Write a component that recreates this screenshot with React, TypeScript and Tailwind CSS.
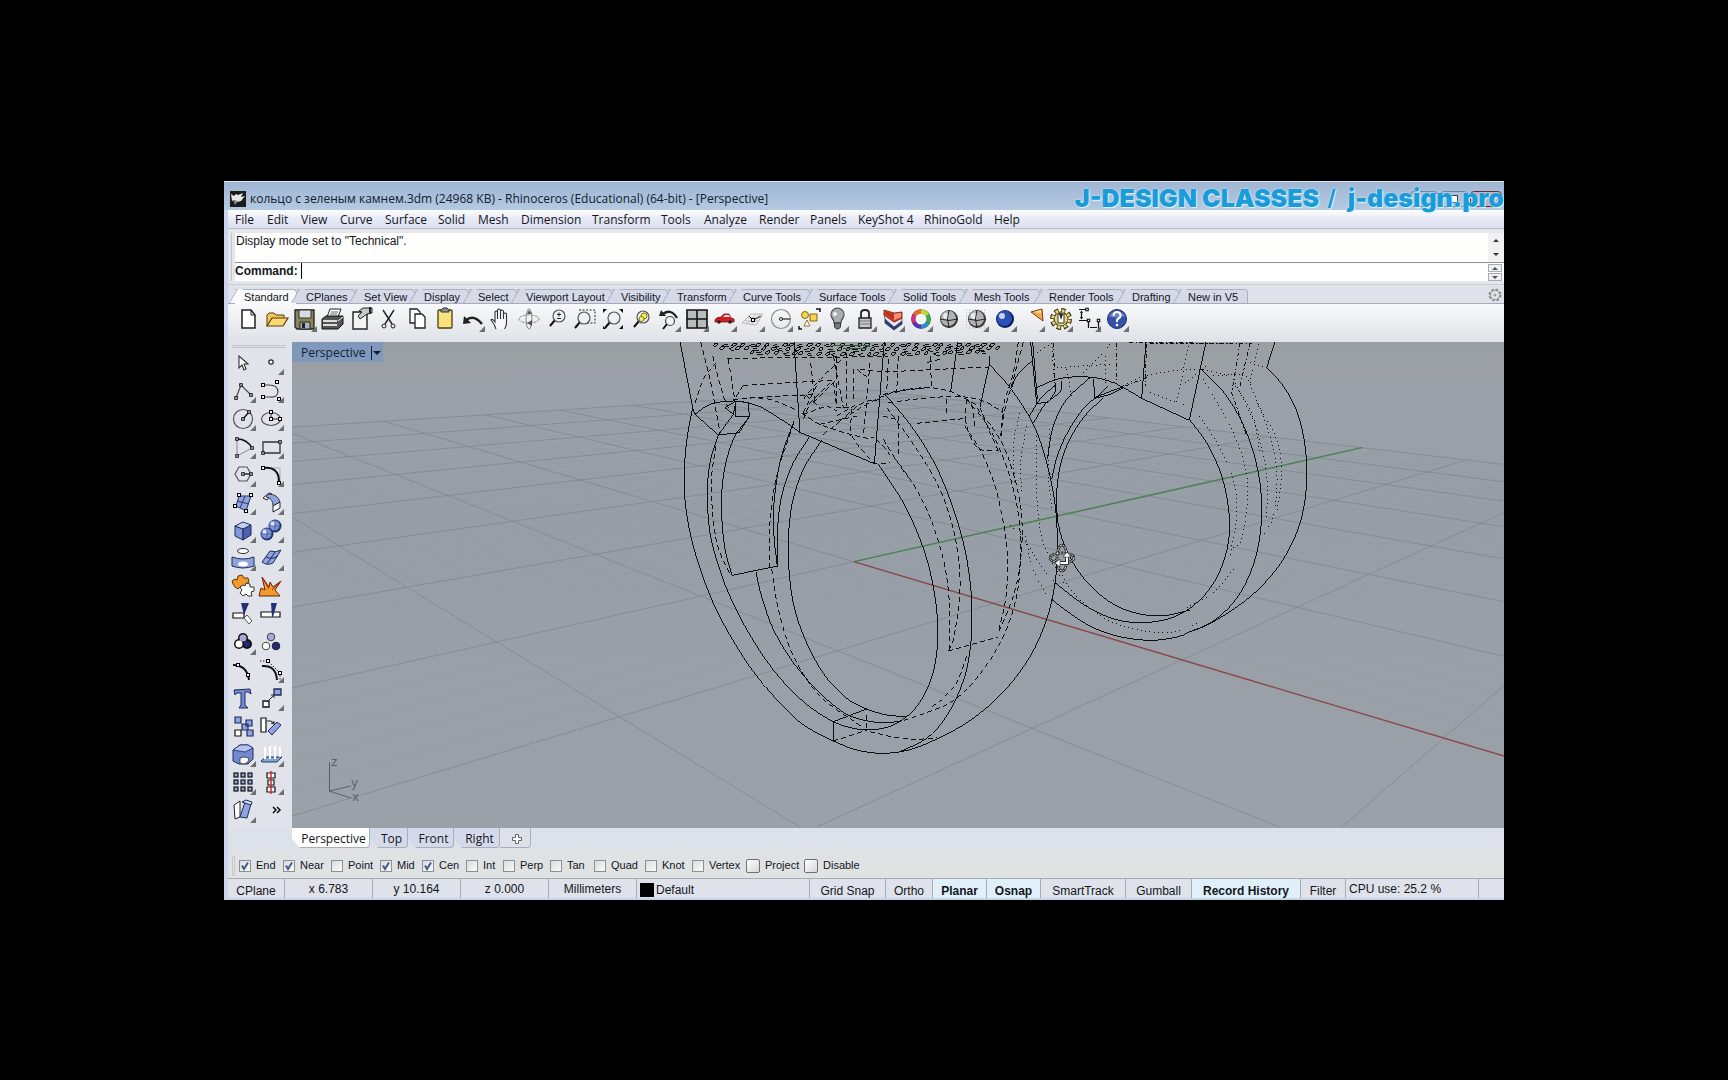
import React from "react";

type Pt = [number, number];

const ARIAL = "font-['Liberation_Sans',Arial,sans-serif]";
const SEGOE = "font-['Open_Sans','Noto_Sans',sans-serif]";

/* ---------- geometry helpers ---------- */

const dist = (a: Pt, b: Pt) => Math.hypot(a[0] - b[0], a[1] - b[1]);

function spline(p: number[]): string {
  const pts: Pt[] = [];
  for (let i = 0; i < p.length; i += 2) pts.push([p[i], p[i + 1]]);
  let d = `M${pts[0][0]} ${pts[0][1]}`;
  for (let i = 0; i < pts.length - 1; i++) {
    const a = pts[i - 1] || pts[i];
    const b = pts[i];
    const c = pts[i + 1];
    const e = pts[i + 2] || c;
    const len = dist(b, c);
    const k1 = len / 3 / (dist(a, b) + len);
    const k2 = len / 3 / (len + dist(c, e));
    d += `C${b[0] + (c[0] - a[0]) * k1} ${b[1] + (c[1] - a[1]) * k1} ${c[0] - (e[0] - b[0]) * k2} ${c[1] - (e[1] - b[1]) * k2} ${c[0]} ${c[1]}`;
  }
  return d;
}

function cross(a: Pt, b: Pt, c: Pt, d: Pt): Pt {
  const m1 = (b[1] - a[1]) / (b[0] - a[0]);
  const m2 = (d[1] - c[1]) / (d[0] - c[0]);
  const x = (c[1] - a[1] + m1 * a[0] - m2 * c[0]) / (m1 - m2);
  return [x, a[1] + m1 * (x - a[0])];
}

const V1: Pt = [2100, -51];
const V2: Pt = [-509, -195];
const FAR_LEFT: Pt = [0, 262];
const FAR_RIGHT: Pt = [1564, 373];

const gridUp: Pt[] = [[0, 262], [0, 310], [0, 365], [0, 435], [0, 522], [0, 638], [0, 803], [0, 1045], [0, 1430], [680, 1460], [1357, 1460]];
const gridDown: Pt[] = [[1564, 373], [1564, 425], [1564, 483], [1564, 560], [1564, 656], [1564, 785], [1564, 948], [1564, 1248], [1275, 1460], [657, 1460]];

const gridPath =
  gridUp.map((p) => { const q = cross(p, V1, V2, FAR_RIGHT); return `M${p[0]} ${p[1]}L${q[0]} ${q[1]}`; }).join("") +
  gridDown.map((p) => { const q = cross(p, V2, V1, FAR_LEFT); return `M${p[0]} ${p[1]}L${Math.max(q[0], 0)} ${q[0] < 0 ? p[1] + ((V2[1] - p[1]) / (V2[0] - p[0])) * (0 - p[0]) : q[1]}`; }).join("");

function fade(points: Pt[], v: Pt, w: Pt, f: Pt, mix: number): string {
  let d = "";
  for (let i = 0; i < points.length - 1; i++) {
    if (points[i][0] !== points[i + 1][0]) continue;
    for (let k = 1; k < 5; k++) {
      const p: Pt = [points[i][0], points[i][1] + ((points[i + 1][1] - points[i][1]) * k) / (5 + mix * (5 - k))];
      const q = cross(p, v, w, f);
      d += `M${p[0]} ${p[1]}L${q[0]} ${q[1]}`;
    }
  }
  return d;
}
const minorPath = fade(gridUp, V1, V2, FAR_RIGHT, 0.1) + fade(gridDown, V2, V1, FAR_LEFT, 0.1);

const frontSolid: number[][] = [
  [30, 18, 50, 120, 68, 215],
  [68, 215, 52, 300, 43, 400, 44, 480, 56, 570, 82, 672, 130, 802, 190, 915, 260, 1020, 370, 1142, 430, 1185, 490, 1215, 560, 1242, 640, 1252, 720, 1241, 800, 1209, 900, 1154, 1000, 1068, 1080, 962, 1130, 850, 1155, 742, 1162, 640, 1156, 510, 1130, 380, 1090, 265, 1020, 155, 958, 85],
  [145, 297, 120, 380, 112, 480, 120, 590, 140, 672, 175, 770, 230, 880, 310, 1002, 400, 1097, 490, 1157, 560, 1179, 620, 1180, 680, 1162, 740, 1112, 785, 1025, 802, 930, 800, 822, 780, 705, 750, 610, 700, 500, 625, 385],
  [455, 312, 400, 400, 367, 500, 355, 610, 357, 700, 370, 802, 403, 905, 460, 1012, 530, 1087, 590, 1119, 650, 1137, 712, 1142],
  [420, 300, 370, 380, 335, 480, 322, 590, 322, 690],
  [372, 255, 332, 370, 312, 500, 312, 600, 322, 690],
  [258, 709, 275, 782, 310, 880, 370, 980, 440, 1062, 490, 1107, 540, 1140, 620, 1159, 690, 1157],
  [238, 242, 190, 310, 160, 420, 155, 530, 165, 640, 186, 718],
  [645, 175, 720, 265, 790, 375, 840, 490, 880, 620, 900, 735, 906, 840, 900, 942, 880, 1035, 830, 1140, 770, 1207, 690, 1247],
  [75, 235, 120, 205, 190, 195, 250, 205, 310, 235, 392, 290],
];
const frontLines =
  "M186 718L325 690M490 1157V1215M490 1157L590 1119M372 18L390 290M643 18L613 383L392 290M68 215L75 235L145 297L207 290L238 242L235 200L198 195V242H238M165 215L198 195L190 235ZM190 235L145 297M863 18L842 165M958 85L930 212M958 60V85";
const frontDashed: number[][] = [
  [92, 18, 120, 130, 150, 290], [128, 60, 160, 180, 175, 215], [175, 70, 195, 195], [140, 80, 105, 120, 75, 200],
  [240, 185, 300, 190, 385, 225], [190, 190, 300, 182, 440, 176], [400, 190, 450, 130, 520, 65],
  [640, 175, 700, 162, 780, 155, 845, 168, 925, 210], [655, 200, 760, 187, 870, 182, 940, 195, 1000, 230],
  [395, 230, 450, 265, 580, 305, 613, 305], [460, 295, 540, 235, 630, 185, 690, 165, 780, 155], [510, 255, 580, 200, 640, 190],
  [885, 250, 900, 300, 930, 340, 985, 345], [885, 270, 935, 350, 975, 450, 1000, 560, 1012, 650, 1012, 730, 1005, 800, 985, 890],
  [920, 215, 960, 265, 1000, 330, 1035, 430, 1055, 540, 1052, 672, 1030, 780, 985, 890],
  [890, 190, 940, 250, 985, 330, 1025, 440, 1048, 560, 1050, 700, 1030, 820, 980, 940, 900, 1050, 840, 1100, 770, 1130, 690, 1157],
  [650, 215, 720, 310, 800, 440, 845, 560, 868, 690, 868, 790, 850, 910, 835, 945],
  [620, 310, 700, 400, 770, 520, 820, 670, 838, 800, 838, 945], [835, 945, 985, 903],
  [890, 960, 860, 1040, 820, 1085, 780, 1117], [600, 1187, 680, 1205, 740, 1210, 800, 1205],
  [305, 700, 325, 820, 370, 960, 450, 1080, 575, 1172], [138, 330, 125, 420, 127, 520, 143, 630, 180, 715],
  [370, 265, 320, 420, 300, 560, 300, 695], [545, 300, 613, 380, 660, 380], [740, 262, 880, 248],
  [1060, 18, 1030, 130, 1005, 220, 990, 310], [1045, 18, 1030, 110, 1000, 210, 995, 300], [640, 310, 690, 390, 720, 430],
];
const frontDashLines =
  "M170 67L640 62M220 148L490 133L500 215H540M220 148L190 195M422 80L435 200M500 65V215M530 50V210M550 100V200M600 80L590 190M570 100L640 108L955 93M490 60L520 215M830 190V235M685 240V360M655 70L650 170M685 60L680 170M780 60L785 155M770 80L810 70M490 1215L590 1183M590 1137V1183M400 235L470 210L500 225M450 265L560 240M440 150L395 240M545 220L540 300M590 200L580 300M410 180L450 215M430 200L500 130M560 100L600 130M640 240L680 250M890 190L885 250M905 205L915 270M930 215L960 290L985 345M400 250L420 200L480 140M500 240L560 205";

const backSolid: number[][] = [
  [800, 95, 850, 150, 890, 225, 912, 310, 920, 400, 914, 500, 890, 590, 840, 685, 770, 765, 700, 820, 620, 868, 575, 885],
  [152, 788, 200, 825, 270, 870, 350, 900, 450, 913, 530, 903, 575, 885],
  [605, 100, 680, 180, 740, 290, 775, 410, 785, 520, 775, 630, 745, 725, 700, 800, 640, 855, 580, 885],
  [570, 253, 620, 320, 665, 420, 687, 530, 685, 620, 660, 705, 620, 770, 565, 820, 500, 850, 410, 860, 330, 845, 250, 805, 165, 740],
  [310, 185, 250, 245, 200, 330, 175, 420, 170, 520, 185, 605, 225, 690, 280, 758, 350, 810, 430, 836, 500, 838, 570, 822],
  [155, 430, 175, 350, 220, 260, 280, 190, 370, 152], [142, 370, 160, 270, 200, 190, 270, 125],
  [100, 262, 135, 205, 182, 165, 185, 135], [88, 240, 120, 190, 168, 145],
  [110, 155, 170, 130, 240, 122, 310, 130, 370, 155, 425, 187], [285, 187, 330, 175, 370, 155], [95, 75, 50, 120, 35, 155],
];
const backLines = "M825 18L800 95M425 187L568 253L618 18M438 18L425 187M92 18L110 203L145 198L168 165V140M98 18L112 190M280 128L285 187L325 150";
const backDotted: number[][] = [
  [370, 150, 420, 125, 520, 105, 600, 100, 700, 120], [590, 230, 650, 320, 700, 430, 710, 540, 690, 660],
  [610, 130, 690, 270, 735, 390, 742, 500, 720, 620, 690, 640], [700, 130, 770, 280, 800, 420, 800, 550],
  [740, 120, 800, 270, 830, 400, 820, 540, 790, 600], [770, 200, 830, 310, 845, 410, 830, 530],
  [165, 670, 220, 770, 320, 850, 430, 885, 520, 888, 600, 860], [560, 815, 640, 770, 700, 700],
  [60, 230, 40, 330, 45, 450], [110, 300, 110, 480, 130, 620, 190, 740], [150, 280, 145, 400, 155, 520],
  [75, 600, 100, 700, 140, 780], [80, 270, 62, 380, 65, 470], [700, 140, 755, 230, 780, 350], [230, 130, 290, 70, 330, 25],
  [20, 560, 65, 600, 130, 700, 165, 740],
];
const backDotLines = "M450 170L560 210M155 20L165 160M318 60V150M170 95L330 85M565 30L530 200M775 25L750 140M750 80L800 95M640 120L720 115M110 50L150 25M545 150L620 90M200 100L215 180";
const backDashLines = "M388 20L755 22M350 20V140M720 20L695 170L740 300M750 20L720 150M440 25L435 150M450 24H700M160 20L165 140M375 150L440 125";

/* rows of small stone seats along the head of the ring */
function stones(): string {
  let d = "";
  for (let r = 0; r < 3; r++) {
    for (let i = 0; i < 34; i++) {
      const x = 130 + r * 14 + i * 25 + ((i * 11 + r * 5) % 9);
      if (r === 2 && (i < 3 || i > 31)) continue;
      const bend = Math.sin(((x - 130) / 860) * Math.PI);
      const y = 24 + r * 9 + bend * r * 5 + ((i * 5) % 5);
      const w = 12 + ((i * 5 + r * 3) % 7);
      d += i % 3 === 1
        ? `M${x} ${y + 4}l${w} -3M${x + 4} ${y + 8}l${w} 1`
        : `M${x} ${y + 5}q${w / 3} -10 ${w} -8q2 7 ${-w / 2} 10z`;
    }
  }
  return d;
}
const stonePath = stones();

function Scene() {
  return (
    <svg className="block size-full" viewBox="292 342 1212 486" preserveAspectRatio="xMidYMid slice" role="img" aria-label="Perspective viewport with two ring models">
      <defs>
        <linearGradient id="sky" x1="0" y1="0" x2="0" y2="1">
          <stop offset="0" stopColor="#9a9fa2" />
          <stop offset="0.12" stopColor="#9aa1a9" />
          <stop offset="0.35" stopColor="#979ea7" />
          <stop offset="1" stopColor="#9aa1a8" />
        </linearGradient>
      </defs>
      <rect x="292" y="342" width="1212" height="486" fill="url(#sky)" />
      <g transform="translate(290 340) scale(0.7755 0.33333)" fill="none">
        <path d={minorPath} stroke="#8d959d" strokeWidth="1" strokeOpacity="0.2" vectorEffect="non-scaling-stroke" />
        <path d={gridPath} stroke="#7f868d" strokeWidth="1" strokeOpacity="0.75" vectorEffect="non-scaling-stroke" />
        <path d="M727 665L1382 323" stroke="#4b8350" strokeWidth="1.4" vectorEffect="non-scaling-stroke" />
        <path d="M727 665L1568 1250" stroke="#8d474c" strokeWidth="1.4" vectorEffect="non-scaling-stroke" />
      </g>
      <g transform="translate(1000 336) scale(0.33333)" fill="none" stroke="#0c0e12" strokeWidth="3" shapeRendering="crispEdges">
        {backSolid.map((p, i) => <path key={i} d={spline(p)} />)}
        <path d={backLines} />
        <g strokeDasharray="3 10">
          {backDotted.map((p, i) => <path key={i} d={spline(p)} />)}
          <path d={backDotLines} />
        </g>
        <path d={backDashLines} strokeDasharray="12 7 4 7" />
      </g>
      <g transform="translate(670 336) scale(0.33333)" fill="none" stroke="#0c0e12" strokeWidth="3" shapeRendering="crispEdges">
        {frontSolid.map((p, i) => <path key={i} d={spline(p)} />)}
        <path d={frontLines} />
        <g strokeDasharray="15 10">
          {frontDashed.map((p, i) => <path key={i} d={spline(p)} />)}
          <path d={frontDashLines} />
        </g>
        <path d={stonePath} />
        <path d="M490 30h110l-20 8h-60" stroke="#315a3a" />
      </g>
      <g stroke="#5a6067" fill="none">
        <path d="M329.500 762V791L351 786M329 791L351 798" />
      </g>
      <g fill="#5a6067" fontFamily="DejaVu Sans, sans-serif" fontSize="12">
        <text x="331" y="766">z</text>
        <text x="351" y="787">y</text>
        <text x="352" y="801">x</text>
      </g>
      <g stroke="#fff" fill="none">
        <ellipse cx="1062" cy="558" rx="12" ry="5" stroke="#222" strokeWidth="2.500" />
        <ellipse cx="1062" cy="558" rx="5" ry="13" stroke="#222" strokeWidth="2.500" />
        <ellipse cx="1062" cy="558" rx="12" ry="5" strokeDasharray="2 1" />
        <ellipse cx="1062" cy="558" rx="5" ry="13" strokeDasharray="2 1" />
        <path d="M1057 563h10v-9" stroke="#222" strokeWidth="3.500" />
        <path d="M1057 563h10v-9" strokeWidth="2" />
        <path d="M1055 563l5-4v8zM1067 552l-4 5h8z" fill="#fff" stroke="#222" strokeWidth=".6" />
      </g>
    </svg>
  );
}

/* ---------- icon primitives ---------- */

const Nodes = ({ at, s = 3 }: { at: Pt[]; s?: number }) => (
  <>{at.map(([x, y], i) => <rect key={i} x={x - s / 2} y={y - s / 2} width={s} height={s} fill="#fff" stroke="#000" strokeWidth="1" />)}</>
);
const Lens = ({ x, y, fill = "#eef2f6" }: { x: number; y: number; fill?: string }) => (
  <>
    <path d={`M${x - 4} ${y + 4}L${x - 9} ${y + 10}`} stroke="#111" strokeWidth="2" />
    <circle cx={x} cy={y} r="6" fill={fill} stroke="#555" strokeWidth="1.200" />
  </>
);
const Ball = ({ c, dark, cx = 15, cy = 14, r = 9 }: { c: string; dark: string; cx?: number; cy?: number; r?: number }) => (
  <>
    <circle cx={cx} cy={cy} r={r} fill={dark} />
    <circle cx={cx - 0.6} cy={cy - 0.6} r={r - 1.3} fill={c} />
    <circle cx={cx - r / 3} cy={cy - r / 3} r={r / 3} fill="#fff" fillOpacity="0.75" />
  </>
);
const SphereGray = () => (
  <>
    <Ball c="#b2b2b2" dark="#3a3a3a" />
    <path d="M6 14q9 3 18 0M15 5q-3 9 0 18" stroke="#222" fill="none" />
  </>
);

type Tool = { name: string; art: React.ReactNode; more?: boolean };

const topTools: Tool[] = [
  { name: "New", art: <><path d="M8 5h9l4 5v13H8z" fill="#fff" stroke="#222" strokeWidth="1.500" /><path d="M17 5v5h4" fill="none" stroke="#222" /></> },
  { name: "Open", art: <><path d="M5 21V10l2-2h5l2 2h8v3" fill="#f0c65a" stroke="#5b3c09" /><path d="M5 21l5-8h16l-5 8z" fill="#fbd875" stroke="#5b3c09" strokeWidth="1.200" /></> },
  { name: "Save", more: true, art: <><path d="M5 5h19v19H7l-2-2z" fill="#8b8456" stroke="#222" strokeWidth="1.300" /><path d="M9 5h12v8H9z" fill="#d7dce0" stroke="#333" /><path d="M10 17h10v7H10z" fill="#a7b6c6" stroke="#222" /><path d="M12 18h3v5h-3z" fill="#222" /></> },
  { name: "Print", art: <><path d="M9 12L12 4h11l-3 8z" fill="#fff" stroke="#222" /><path d="M13 7h7M12 9h7" stroke="#666" /><path d="M4 14l4-3h17v8l-5 5H4z" fill="#555" stroke="#111" /><path d="M5 15h14v2H5zM5 19h14v2H5z" fill="#ddd" /><path d="M20 16l5-4" stroke="#eee" /></> },
  { name: "Properties", art: <><path d="M7 7h14v17H7z" fill="#f4f4f4" stroke="#222" strokeWidth="1.400" /><path d="M13 6l4-3h9v5l-5 1-7 5-2-3 4-4z" fill="#c9c9c9" stroke="#222" /><path d="M24 2v6" stroke="#222" strokeWidth="2" /></> },
  { name: "Cut", art: <><path d="M9 5l9 14M20 5l-9 14" stroke="#222" strokeWidth="1.400" /><circle cx="10" cy="21" r="2" fill="none" stroke="#222" /><circle cx="19" cy="21" r="2" fill="none" stroke="#222" /></> },
  { name: "Copy", art: <><path d="M8 4h7l3 3v11H8z" fill="#fff" stroke="#222" strokeWidth="1.300" /><path d="M13 9h7l3 3v11H13z" fill="#fff" stroke="#222" strokeWidth="1.300" /></> },
  { name: "Paste", art: <><rect x="8" y="5" width="14" height="18" rx="1" fill="#f7e27e" stroke="#4c3d10" strokeWidth="1.300" /><path d="M11 7V5l2-2h4l2 2v2z" fill="#8e8e8e" stroke="#333" /></> },
  { name: "Undo", more: true, art: <><path d="M8 15q8-6 16 4" fill="none" stroke="#222" strokeWidth="2.500" /><path d="M5 19l1-8 7 7z" fill="#222" /></> },
  { name: "Pan", art: <path d="M10 24q-1-4-5-9 1-2 4 2V7q1-2 2.500 0v-2q1.500-2 3 0v1q1.500-2 3 0v3q2-2 3 0v9q0 3-2 6M11.500 7v7M14.500 6v8M17.500 8v6" fill="#f5f7f9" stroke="#333" strokeWidth="1.100" /> },
  { name: "Rotate view", art: <><ellipse cx="15" cy="14" rx="10" ry="4" fill="none" stroke="#888" strokeDasharray="3 1" /><ellipse cx="15" cy="14" rx="3" ry="10" fill="none" stroke="#888" /><path d="M13 18l5-3v6zM15 5l3 4h-5z" fill="#555" /></> },
  { name: "Zoom dynamic", art: <><Lens x={17} y={11} /><path d="M17 7.500v4M15 9.500h4M15 13.500h4" stroke="#222" /></> },
  { name: "Zoom window", art: <><path d="M9 5h16v13H17" fill="none" stroke="#222" strokeDasharray="2 1.500" /><Lens x={14} y={13} /></> },
  { name: "Zoom extents", art: <><path d="M5 4h4L5 8zM25 4h-4l4 4zM25 24h-4l4-4zM5 24h3l-3-3z" fill="#111" /><Lens x={16} y={13} /></> },
  { name: "Zoom selected", art: <><Lens x={17} y={12} /><circle cx="18" cy="11" r="3" fill="#f7f13e" stroke="#777126" /><circle cx="15.500" cy="14" r="2.500" fill="#f3ee7a" stroke="#777126" /></> },
  { name: "Undo view", more: true, art: <><path d="M9 9q8-6 14 4" fill="none" stroke="#222" strokeWidth="2.300" /><path d="M5 11l2-6 5 6z" fill="#222" /><circle cx="16" cy="16" r="4.500" fill="#eef2f6" stroke="#444" strokeWidth="1.200" /><path d="M13 19l-4 5" stroke="#111" strokeWidth="2" /></> },
  { name: "Four viewports", more: true, art: <><path d="M5 5h20v18H5z" fill="#b9bcbc" stroke="#111" strokeWidth="1.600" /><path d="M15 5v18M5 14h20" stroke="#111" strokeWidth="1.600" /></> },
  { name: "Shaded view", more: true, art: <><path d="M5 15q1-3 6-3l3-3h5l2 4 3 1v3H5z" fill="#cf1d23" stroke="#7d0d12" strokeWidth=".8" /><path d="M13 12l2-2h4l1 2z" fill="#f0dede" /><circle cx="9" cy="17" r="1.800" fill="#222" /><circle cx="20" cy="17" r="1.800" fill="#222" /></> },
  { name: "Set CPlane", more: true, art: <><path d="M4 18l9-9h12l-7 11zM9 13h13M7 16h14M9 19l9-10M13 20l9-11" fill="none" stroke="#bbb" /><path d="M15 15l8-4M15 15l-4-4" stroke="#222" /><Nodes at={[[15, 15]]} /></> },
  { name: "Object snap", more: true, art: <><circle cx="15" cy="14" r="9.500" fill="none" stroke="#8b8b8b" strokeWidth="1.200" /><path d="M15 14h9" stroke="#222" strokeWidth="1.200" /><circle cx="15" cy="14" r="1.500" fill="#fff" stroke="#222" /></> },
  { name: "Select", more: true, art: <><circle cx="11" cy="10" r="3.500" fill="#f6d353" stroke="#826512" /><path d="M16 9h7v7h-7z" fill="#f6d353" stroke="#826512" /><path d="M13 15l3 6h-6z" fill="#fff" stroke="#a06a30" /><path d="M22 4h4v3M8 24H5v-3" fill="none" stroke="#111" strokeWidth="1.500" /></> },
  { name: "Hide", more: true, art: <><path d="M12 18q0-3-2-5a6.500 6.500 0 1 1 11 0q-2 2-2 5z" fill="#a9adb0" stroke="#444" strokeWidth="1.200" /><path d="M12.500 18h6v4l-2 2h-2l-2-2z" fill="#777" stroke="#333" /><circle cx="13" cy="9" r="2" fill="#eee" /></> },
  { name: "Lock", more: true, art: <><path d="M11 13V8q0-3 4-3t4 3v5" fill="none" stroke="#222" strokeWidth="1.800" /><path d="M9 13h12v10H9z" fill="#c6c8ca" stroke="#222" strokeWidth="1.300" /><path d="M10 16h10M10 19h10" stroke="#777" /></> },
  { name: "Layers", more: true, art: <><path d="M7 14l9 8 8-6v3l-8 6-9-7z" fill="#29408c" stroke="#20202c" strokeWidth=".7" /><path d="M6 9l10 8 8-4v3l-8 6-9-8z" fill="#e9e9f4" stroke="#333" strokeWidth=".7" /><path d="M6 5l10 3 8-1v6l-8 4-10-7z" fill="#e14a2c" stroke="#681c12" strokeWidth=".8" /><path d="M7 6l9 3v6L8 10z" fill="#c02f1a" /><path d="M16 9l7-1v4l-7 3z" fill="#ff9272" /></> },
  { name: "Object colour", more: true, art: <><circle cx="15" cy="14" r="9.800" fill="#333" /><g fill="none" strokeWidth="4"><path d="M15 6.500a7.500 7.500 0 0 1 6.500 3.700" stroke="#c3d936" /><path d="M21.500 10.200a7.500 7.500 0 0 1 0 7.500" stroke="#36b04b" /><path d="M21.500 17.700a7.500 7.500 0 0 1-6.500 3.800" stroke="#2b8fd0" /><path d="M15 21.500a7.500 7.500 0 0 1-6.500-3.800" stroke="#5435b0" /><path d="M8.500 17.700a7.500 7.500 0 0 1 0-7.500" stroke="#cf2c8c" /><path d="M8.500 10.200a7.500 7.500 0 0 1 6.500-3.700" stroke="#ec6a26" /></g><circle cx="15" cy="14" r="5.500" fill="#f4f5f6" /></> },
  { name: "Shade", art: <SphereGray /> },
  { name: "Render preview", more: true, art: <><path d="M4 5h21M4 8h21M4 11h21M4 14h21M4 17h21M4 20h21M4 23h21" stroke="#aaa" strokeDasharray="1 2" /><SphereGray /></> },
  { name: "Render", more: true, art: <Ball c="#2a50b8" dark="#0b1c5a" /> },
  { name: "Spotlight", more: true, art: <><path d="M13 7l11-3 1 12z" fill="#f3a94a" stroke="#6b4212" /><path d="M16 7l7-2v3z" fill="#ffdf95" /></> },
  { name: "Options", more: true, art: <><circle cx="15" cy="14" r="8.500" fill="none" stroke="#3c3410" strokeWidth="5" strokeDasharray="4 2.675" /><circle cx="15" cy="14" r="7" fill="#e8d87c" stroke="#3c3410" strokeWidth="1.200" /><circle cx="15" cy="14" r="8.300" fill="none" stroke="#e8d87c" strokeWidth="3" strokeDasharray="2.500 4.019" strokeDashoffset="-.75" /><path d="M12 9h6v9h-6z" fill="#fff" stroke="#333" /><path d="M13 8l4 1-2 6z" fill="#222" /></> },
  { name: "Dimension", more: true, art: <><path d="M5 4.500h8M5 15.500h9M7.500 6v8M14.500 16v7M24.500 16v8M16 22.500h7" stroke="#111" strokeWidth="1.200" fill="none" /><path d="M6 8l1.500-2.500L9 8zM6 12l1.500 2.500L9 12z" fill="#111" /><Nodes at={[[13, 4.500], [14.500, 15.500], [24.500, 15.500]]} s={2.500} /></> },
  { name: "Help", more: true, art: <><circle cx="15" cy="14" r="9.500" fill="#3550a8" stroke="#1c2e70" /><path d="M7 11a9 8 0 0 1 16 0q-8 3-16 0z" fill="#6f86cb" /><path d="M11.500 11q0-4 3.500-4t3.500 3.500q0 2-2 3T15 17" fill="none" stroke="#fff" strokeWidth="2" /><circle cx="15" cy="20" r="1.300" fill="#fff" /></> },
];

const BLUE = "#8fa3dc";
const sideTools: Tool[] = [
  { name: "Select arrow", art: <path d="M10 8v12l3-3 2 5 2-1-2-5h4z" fill="#fff" stroke="#333" strokeWidth="1.100" /> },
  { name: "Point", more: true, art: <circle cx="14" cy="14" r="2.200" fill="#fff" stroke="#222" strokeWidth="1.200" /> },
  { name: "Polyline", more: true, art: <><path d="M7 22l5-13 10 10" fill="none" stroke="#444" strokeWidth="1.200" /><Nodes at={[[7, 22], [12, 9], [22, 19]]} s={2.500} /></> },
  { name: "Curve", more: true, art: <><path d="M6 9h6q9 0 9 7-1 6-8 5H6" fill="none" stroke="#444" strokeWidth="1.200" /><Nodes at={[[6, 9], [20, 6], [6, 21], [22, 23]]} /></> },
  { name: "Circle", more: true, art: <><circle cx="14" cy="15" r="9.500" fill="none" stroke="#555" strokeWidth="1.200" /><path d="M14 15l6-7" stroke="#111" strokeWidth="1.300" /><Nodes at={[[14, 15], [20, 8]]} s={2.500} /></> },
  { name: "Ellipse", more: true, art: <><ellipse cx="14" cy="15" rx="9.500" ry="6.500" fill="none" stroke="#555" strokeWidth="1.200" /><path d="M14 8v7h9" fill="none" stroke="#222" /><Nodes at={[[14, 8], [14, 15], [23, 15]]} /></> },
  { name: "Arc", more: true, art: <><path d="M8 7q10 0 15 9" fill="none" stroke="#111" strokeWidth="1.500" /><path d="M8 7v17l15-8" fill="none" stroke="#888" /><Nodes at={[[8, 7], [23, 16], [8, 24]]} s={2.500} /></> },
  { name: "Rectangle", more: true, art: <><path d="M6 10h17v11H6z" fill="none" stroke="#333" strokeWidth="1.300" /><Nodes at={[[23, 10], [6, 21]]} s={2.500} /></> },
  { name: "Polygon", more: true, art: <><path d="M6 14l4-7h8l4 7-4 7h-8z" fill="none" stroke="#555" strokeWidth="1.200" /><path d="M14 14h8" stroke="#111" strokeWidth="1.300" /><Nodes at={[[14, 14], [22, 14]]} s={2.500} /></> },
  { name: "Fillet", more: true, art: <><path d="M6 8h17v14" fill="none" stroke="#aaa" /><path d="M6 8q16-2 16 14" fill="none" stroke="#111" strokeWidth="2" /><Nodes at={[[6, 8], [22, 23]]} /></> },
  { name: "Surface", more: true, art: <><path d="M10 8h12l-5 15-10-5z" fill={BLUE} stroke="#2a376e" /><path d="M8 13l12 3M16 8l-5 12" stroke="#2a376e" /><Nodes at={[[10, 7], [22, 7], [6, 18], [17, 23]]} /></> },
  { name: "Extrude surface", more: true, art: <><path d="M6 10l6-5 3 1-5 6z" fill="#fff" stroke="#222" /><path d="M11 6q10 0 12 8l-7 4q0-8-7-9z" fill={BLUE} stroke="#222" strokeWidth=".8" /><path d="M23 14v6l-7 4v-6z" fill="#fff" stroke="#222" /></> },
  { name: "Box", more: true, art: <><path d="M6 10l8 3v11l-8-4z" fill="#8297dd" stroke="#1e2b5e" /><path d="M14 13l8-4v10l-8 5z" fill="#4c61ae" stroke="#1e2b5e" /><path d="M6 10l8-4 8 3-8 4z" fill="#c5d0f2" stroke="#1e2b5e" /></> },
  { name: "Spheres", more: true, art: <><Ball c="#7f95db" dark="#23336f" cx={18} cy={10} r={6.500} /><Ball c="#7f95db" dark="#23336f" cx={10} cy={18} r={6.500} /><path d="M12 10h12M18 4v12M4 18h12M10 12v12" stroke="#23336f" strokeOpacity=".6" strokeWidth=".8" /></> },
  { name: "Project", more: true, art: <><ellipse cx="14" cy="7" rx="5.500" ry="2.500" fill="#fff" stroke="#333" /><path d="M3 13q11 4 22 0v9q-11 4-22 0z" fill={BLUE} stroke="#1e2b5e" /><ellipse cx="14" cy="20" rx="5" ry="2.500" fill="#fff" /></> },
  { name: "Surface grid", more: true, art: <><path d="M5 18l8-11q6 2 11-1l-8 13q-6 3-11-1z" fill={BLUE} stroke="#1e2b5e" /><path d="M9 13q6 3 12-1M10 20l8-12" fill="none" stroke="#1e2b5e" /></> },
  { name: "Join", art: <><path d="M4 12l-1-3 3-2 2 1 1-4 4-1 2 3 4 0 1 4-3 2 1 3-4 1-2-2-3 3-3-2z" fill="#f29a2c" stroke="#5d360a" /><path d="M11 15l3-2 2 1 1-3 4 1 0 3 4 0 0 4-3 1 1 4-4 0-2-2-3 2-3-3 2-3z" fill="#fff" stroke="#333" /></> },
  { name: "Explode", art: <><path d="M2 24l2-8 4 2L5 5l7 10 1-5 3 5 8-6-6 9 5 6z" fill="#f29a2c" stroke="#5d260a" /><path d="M5 5l7 12M24 9l-9 9" stroke="#b91f15" /></> },
  { name: "Trim", art: <><path d="M12 3h8l-5 12z" fill="#243074" /><path d="M4 13h11v5H4z" fill="#fff" stroke="#111" strokeWidth="1.200" /><path d="M15 18l3-3 5 6-3 3z" fill="#fff" stroke="#555" /></> },
  { name: "Split", art: <><path d="M4 12h19v5H4z" fill="#fff" stroke="#111" strokeWidth="1.200" /><path d="M14 3h6l-4 14h-1z" fill="#243074" /></> },
  { name: "Group", more: true, art: <><circle cx="14" cy="10" r="5" fill="#111" /><circle cx="10" cy="16" r="5" fill="#111" /><circle cx="18" cy="16" r="5" fill="#111" /><circle cx="14" cy="10" r="3.500" fill="#a7a7d8" /><circle cx="10" cy="16" r="3.500" fill="#fff" /><circle cx="18" cy="16" r="3" fill="#232a78" /></> },
  { name: "Ungroup", art: <><circle cx="14" cy="9" r="3.800" fill="#a7a7d8" stroke="#444" /><circle cx="9" cy="18" r="3.800" fill="#fff" stroke="#444" /><circle cx="19" cy="18" r="3.800" fill="#232a78" stroke="#222" /></> },
  { name: "Edit points", art: <><path d="M4 9q14 0 16 15" fill="none" stroke="#111" strokeWidth="2" /><Nodes at={[[9, 9], [19, 19]]} /></> },
  { name: "Control points", more: true, art: <><path d="M5 10q14-1 15 14" fill="none" stroke="#111" strokeWidth="2" /><path d="M3 5h8l12 12v8" fill="none" stroke="#222" strokeDasharray="1.500 1.500" /><Nodes at={[[11, 5], [23, 17]]} /></> },
  { name: "Text", art: <path d="M5 6l16-1 1 5-3-2h-3v13l3 3h-9l2-3V9H8l-2 2z" fill="#7289d2" stroke="#1e2b5e" /> },
  { name: "Move", more: true, art: <><path d="M6 17h6v6H6z" fill="#fff" stroke="#111" strokeWidth="1.300" /><path d="M17 5h7v6h-7z" fill={BLUE} stroke="#1e2b5e" strokeWidth="1.300" /><path d="M12 16l4-4M14 11h3v3" fill="none" stroke="#222" /></> },
  { name: "Copy objects", art: <><g fill={BLUE} stroke="#1e2b5e" strokeWidth="1.200"><path d="M6 5h6v6H6zM17 8h6v6h-6zM13 12h6v6h-6zM18 18h6v6h-6z" /></g><path d="M6 18h6v6H6z" fill="#fff" stroke="#111" strokeWidth="1.200" /></> },
  { name: "Rotate", art: <><path d="M4 6h5v14H4z" fill="#fff" stroke="#111" strokeWidth="1.200" /><path d="M11 19l9-9 4 3-9 10z" fill={BLUE} stroke="#1e2b5e" /><path d="M10 9q4-1 7 2M14 11l3 1v-3" fill="none" stroke="#222" /></> },
  { name: "Solid edit", more: true, art: <><path d="M4 10l7-5h8l5 3v11l-5 5H10l-6-3z" fill="#7289d2" stroke="#1e2b5e" /><path d="M4 10l7-5h8l5 3-8 4z" fill="#b5c3ee" stroke="#1e2b5e" strokeWidth=".8" /><path d="M11 18l4-1 5 1-1 4-4 2-4-1z" fill="#fff" stroke="#333" strokeWidth=".8" /></> },
  { name: "Extrude", more: true, art: <><path d="M4 21l5-4h16l-5 5H5z" fill="#7fa6d8" stroke="#1e3b5e" /><path d="M8 19V7M13 19V6M18 19V6M23 17V7" stroke="#fff" strokeWidth="2" /></> },
  { name: "Array", more: true, art: <g fill={BLUE} stroke="#111" strokeWidth="1.200">{[5, 12, 19].map((y) => [5, 12, 19].map((x) => <rect key={`${x}-${y}`} x={x} y={y} width="4" height="4" />))}</g> },
  { name: "Align", more: true, art: <><path d="M10 5h8v5h-8zM11 12h6v5h-6zM10 19h8v5h-8z" fill="#fff" stroke="#111" strokeWidth="1.200" /><path d="M14 3v23" stroke="#d42a2a" strokeWidth="1.500" /></> },
  { name: "Fold", more: true, art: <><path d="M5 9l6-4v16l-5 2z" fill="#fff" stroke="#222" /><path d="M11 21l5-15 6 2-4 14z" fill={BLUE} stroke="#1e2b5e" /><path d="M13 6l4-2 6 2-1 3z" fill="#d6defa" stroke="#1e2b5e" /></> },
];

function ToolButton({ tool }: { tool: Tool }) {
  return (
    <button type="button" aria-label={tool.name} className="size-7 shrink-0">
      <svg viewBox="0 0 28 28" className="size-7" fill="none">
        {tool.art}
        {tool.more && <path d="M27 21v6h-6z" fill="#6d6f72" />}
      </svg>
    </button>
  );
}

const menus: [string, string][] = [
  ["File", "w-8"], ["Edit", "w-[34px]"], ["View", "w-[39px]"], ["Curve", "w-[45px]"], ["Surface", "w-[53px]"], ["Solid", "w-10"],
  ["Mesh", "w-[43px]"], ["Dimension", "w-[71px]"], ["Transform", "w-[69px]"], ["Tools", "w-[43px]"], ["Analyze", "w-[55px]"],
  ["Render", "w-[51px]"], ["Panels", "w-12"], ["KeyShot 4", "w-[66px]"], ["RhinoGold", "w-[70px]"], ["Help", "w-10"],
];

const toolTabs: [string, string][] = [
  ["Standard", "w-[62px]"], ["CPlanes", "w-[58px]"], ["Set View", "w-[60px]"], ["Display", "w-[54px]"], ["Select", "w-12"],
  ["Viewport Layout", "w-[95px]"], ["Visibility", "w-14"], ["Transform", "w-[66px]"], ["Curve Tools", "w-[76px]"],
  ["Surface Tools", "w-[84px]"], ["Solid Tools", "w-[71px]"], ["Mesh Tools", "w-[75px]"], ["Render Tools", "w-[83px]"],
  ["Drafting", "w-14"], ["New in V5", "w-[69px]"],
];

const snaps: [string, string, boolean][] = [
  ["End", "w-11", true], ["Near", "w-12", true], ["Point", "w-[49px]", false], ["Mid", "w-[42px]", true], ["Cen", "w-11", true],
  ["Int", "w-[37px]", false], ["Perp", "w-[47px]", false], ["Tan", "w-11", false], ["Quad", "w-[51px]", false],
  ["Knot", "w-[47px]", false], ["Vertex", "w-[54px]", false], ["Project", "w-[58px]", false], ["Disable", "w-[60px]", false],
];

const viewTabs: [string, string][] = [["Perspective", "w-[78px]"], ["Top", "w-[38px]"], ["Front", "w-[46px]"], ["Right", "w-[46px]"]];

const modes: [string, string, boolean][] = [
  ["Grid Snap", "w-[76px]", false], ["Ortho", "w-[47px]", false], ["Planar", "w-[54px]", true], ["Osnap", "w-[54px]", true],
  ["SmartTrack", "w-[85px]", false], ["Gumball", "w-[66px]", false], ["Record History", "w-[109px]", true], ["Filter", "w-[45px]", false],
];

export default function App() {
  return (
    <div className={`flex min-h-screen flex-col bg-black px-56 pt-[181px] pb-45 text-[#14161c] ${ARIAL}`}>
      <div className="flex flex-1 flex-col overflow-hidden border-b-2 border-[#c3d6e8] bg-[#dfe3ea]">
        <header className={`relative flex h-[29px] items-center border-t border-[#dce6f2] bg-linear-to-b from-[#9fb5d2] to-[#b4cae3] pt-1.5 pl-1.5 text-[12px] text-[#14202e] ${SEGOE}`}>
          <svg viewBox="0 0 16 16" className="mr-1 size-4">
            <rect width="16" height="16" fill="#1c1c1c" />
            <path d="M1 3l3 2 2-2 2 1 5-2-2 4 4-1-4 5-4 1-3-2-2 1z" fill="#e8e8e8" />
            <path d="M3 9l5 1-3 4z" fill="#888" />
          </svg>
          <h1 className="whitespace-nowrap">кольцо с зеленым камнем.3dm (24968 KB) - Rhinoceros (Educational) (64-bit) - [Perspective]</h1>
          <div className="ml-auto flex gap-0.5 pr-0.5">
            <button type="button" aria-label="Minimize" className="h-4 w-7 rounded-sm border border-[#6f8299]" />
            <button type="button" aria-label="Restore" className="grid h-4 w-7 place-items-center rounded-sm border border-[#6f8299]">
              <span className="size-2 border border-[#33475c] bg-white" />
            </button>
            <button type="button" aria-label="Close" className="h-4 w-8 rounded-sm border border-[#5c2a35] bg-[#c8aab5]" />
          </div>
          <div className="absolute top-0.5 right-0 flex h-7 items-center font-['Inter',sans-serif] text-[25px] leading-none font-black whitespace-nowrap text-[#1a9cd8] [text-shadow:0_0_2px_#d5f0ff,1px_1px_1px_#e6f6ff]">
            <span className="pr-2">J-DESIGN CLASSES</span>
            <span className="pr-3 text-[22px] font-bold">/</span>
            <span>j-design.pro</span>
          </div>
        </header>
        <div className="flex min-h-0 flex-1 flex-col border-l-4 border-[#cbd5ec]">
          <nav className={`flex h-[19px] items-center overflow-hidden border-b border-[#b5bace] bg-linear-to-b from-white via-[#e6e9f5] to-[#dde0f0] pt-0.5 pl-[7px] text-[12px] ${SEGOE}`}>
            {menus.map(([m, w]) => (
              <button key={m} type="button" className={`${w} shrink-0 text-left leading-4 whitespace-nowrap`}>{m}</button>
            ))}
          </nav>

          <section className="border-b border-[#c9cdd4] bg-[#e4e6ec] pt-1 pb-[3px] pl-[3px] text-[12px]">
            <div className="border-l border-[#c0c4cc] pl-[3px]">
              <div className="flex h-[30px] justify-between border-b border-[#8f9295] bg-[#fefefc]">
                <p className="pl-[1px] leading-[17px]">Display mode set to "Technical".</p>
                <div className="flex w-4 flex-col items-center justify-between bg-[#f1f1f1] py-1.5 text-[#333]">
                  <button type="button" aria-label="Scroll up" className="border-x-3 border-b-3 border-x-transparent border-b-[#333]" />
                  <button type="button" aria-label="Scroll down" className="border-x-3 border-t-3 border-x-transparent border-t-[#333]" />
                </div>
              </div>
              <div className="flex h-[18px] items-start bg-white">
                <label htmlFor="command" className="leading-4 font-bold">Command:</label>
                <span className="ml-[3px] h-4 w-px bg-black" />
                <input id="command" className="h-4 min-w-0 flex-1 outline-none" />
                <div className="mt-px mr-0.5 flex w-3.5 flex-col gap-px">
                  <button type="button" aria-label="Previous" className="grid h-2 place-items-center border border-[#a9adb3] bg-[#eef0f3]"><span className="border-x-3 border-b-3 border-x-transparent border-b-[#555]" /></button>
                  <button type="button" aria-label="Next" className="grid h-2 place-items-center border border-[#a9adb3] bg-[#eef0f3]"><span className="border-x-3 border-t-3 border-x-transparent border-t-[#555]" /></button>
                </div>
              </div>
            </div>
          </section>

          <div className="flex h-[19px] items-end border-b border-[#a6abb8] bg-[#dfe2e9] pl-[7px] text-[11px]">
            {toolTabs.map(([t, w], i) => (
              <button
                key={t}
                type="button"
                className={`${w} ${i === 0 ? "-mb-px h-[15px] bg-[#fafbfc] before:bg-[#fafbfc]" : "h-3.5 bg-[#d5d9e8] before:bg-[#d5d9e8]"} relative shrink-0 rounded-tr border-t border-r border-[#abb0bf] pl-[9px] text-left leading-[14px] whitespace-nowrap before:absolute before:-top-px before:-left-0.5 before:h-3.5 before:w-1.5 before:-skew-x-[30deg] before:border-l before:border-[#abb0bf]`}
              >
                <span className="relative">{t}</span>
              </button>
            ))}
            <button type="button" aria-label="Toolbar options" className="mr-0.5 mb-px ml-auto size-3.5">
              <svg viewBox="0 0 14 14" className="size-3.5" fill="none" stroke="#888">
                <circle cx="7" cy="7" r="5.500" strokeWidth="2" strokeDasharray="2.500 1.820" />
                <circle cx="7" cy="7" r="4.500" fill="#e3e5ea" stroke="#999" />
                <circle cx="7" cy="7" r="1" />
              </svg>
            </button>
          </div>

          <div className="flex h-[38px] items-start overflow-hidden bg-linear-to-b from-[#f8f9fa] to-[#dee2e7] pt-px pl-1.5">
            {topTools.map((t) => <ToolButton key={t.name} tool={t} />)}
          </div>

          <div className="flex min-h-0 flex-1">
            <aside className="w-16 shrink-0 bg-[#e0e4ea] pl-px">
              <div className="mt-[3px] ml-[3px] h-[3px] w-[54px] border-y border-[#bfc4cb]" />
              <div className="flex flex-wrap pr-1.5">
                {sideTools.map((t) => <ToolButton key={t.name} tool={t} />)}
                <button type="button" aria-label="More tools" className="grid size-7 place-items-center pl-3">
                  <svg viewBox="0 0 10 8" className="h-2 w-2.5" fill="none" stroke="#111" strokeWidth="1.500"><path d="M1 1l3 3-3 3M5 1l3 3-3 3" /></svg>
                </button>
              </div>
            </aside>
            <main className="relative min-w-0 flex-1 overflow-hidden bg-[#9aa1a9]">
              <div className="absolute inset-0"><Scene /></div>
              <div className={`absolute top-0 left-0 flex h-5 items-center bg-[#8099ba] pt-0.5 pr-0.5 pl-[9px] text-[12px] text-[#0f1d3c] ${SEGOE}`}>
                <button type="button">Perspective</button>
                <button type="button" aria-label="Viewport menu" className="ml-1.5 flex h-3.5 items-center border-l border-[#0f1d3c] pl-px">
                  <span className="border-x-4 border-t-4 border-x-transparent border-t-[#0f1d3c]" />
                </button>
              </div>
            </main>
          </div>

          <div className={`flex h-[21px] items-start bg-[#dde2ea] pl-16 text-[12px] ${SEGOE}`}>
            {viewTabs.map(([t, w], i) => (
              <button
                key={t}
                type="button"
                className={`${w} ${i === 0 ? "bg-white" : "bg-[#d5daea]"} h-5 shrink-0 rounded-br border-r border-b border-[#a9aebb] pt-px pl-1.5 text-center leading-[19px] [clip-path:polygon(0_0,100%_0,100%_100%,8px_100%,0_55%)]`}
              >
                {t}
              </button>
            ))}
            <button type="button" aria-label="New viewport tab" className="grid h-5 w-[31px] place-items-center rounded-br border-r border-b border-[#a9aebb] pt-0.5 pl-1">
              <svg viewBox="0 0 10 10" className="size-2.5" fill="#fff" stroke="#666"><path d="M3.500 .5h3v3h3v3h-3v3h-3v-3h-3v-3h3z" /></svg>
            </button>
          </div>

          <div className="flex h-[29px] items-center bg-linear-to-b from-[#dee2e6] to-[#dfe3e2] pt-1 pl-1 text-[11px]">
            <div className="mr-1 h-5 w-[3px] border-x border-[#c3c7cc]" />
            {snaps.map(([label, w, on], i) => (
              <label key={label} className={`${w} flex shrink-0 items-center gap-[5px] whitespace-nowrap`}>
                <span className={`relative grid shrink-0 place-items-center ${i > 10 ? "size-3.5" : "size-3"}`}>
                  <input
                    type="checkbox"
                    defaultChecked={on}
                    className={`peer size-full appearance-none border bg-linear-to-br ${i > 10 ? "rounded-[2px] border-[#6d7174] from-white to-[#d3d6da]" : "border-[#8b9094] from-[#d8dbdd] to-[#fbfbfb]"}`}
                  />
                  <svg viewBox="0 0 12 12" className="pointer-events-none absolute hidden size-3 peer-checked:block" fill="none" stroke="#4a5a8a" strokeWidth="2">
                    <path d="M3 5.500l2 3.500 4-6.500" />
                  </svg>
                </span>
                {label}
              </label>
            ))}
          </div>

          <footer className="flex h-5 items-stretch border-t border-[#a7abb3] bg-[#dfe2ea] text-[12px] leading-5 whitespace-nowrap">
            <button type="button" className="w-[57px] shrink-0 border-r border-[#a7abb3] pt-0.5">CPlane</button>
            <span className="w-22 shrink-0 border-r border-[#a7abb3] text-center">x 6.783</span>
            <span className="w-22 shrink-0 border-r border-[#a7abb3] text-center">y 10.164</span>
            <span className="w-22 shrink-0 border-r border-[#a7abb3] text-center">z 0.000</span>
            <span className="w-22 shrink-0 border-r border-[#a7abb3] text-center">Millimeters</span>
            <button type="button" className="flex w-[173px] items-center gap-0.5 border-r border-[#a7abb3] pt-0.5 pl-[3px]">
              <span className="size-3.5 bg-black" />
              Default
            </button>
            {modes.map(([label, w, on]) => (
              <button key={label} type="button" aria-pressed={on} className={`${w} shrink-0 border-r border-[#a7abb3] pt-0.5 ${on ? "bg-[#dff0fa] font-bold" : ""}`}>{label}</button>
            ))}
            <span className="w-[133px] shrink-0 border-r border-[#a7abb3] pl-[3px]">CPU use: 25.2 %</span>
          </footer>
        </div>
      </div>
    </div>
  );
}
